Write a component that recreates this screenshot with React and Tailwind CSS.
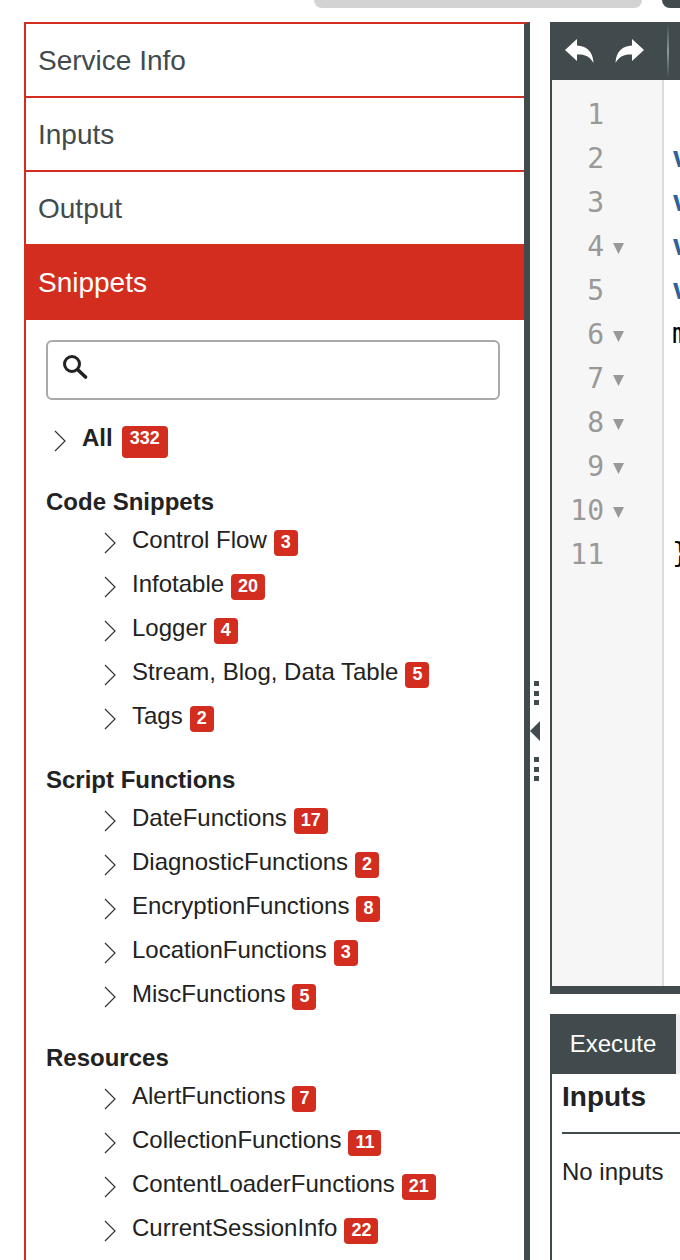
const RED = "bg-[#d32d1f]";

function Chevron() {
  return (
    <svg width="12" height="22" viewBox="0 0 12 22" fill="none" className="shrink-0">
      <path d="M1 1 L11 11 L1 21" stroke="#333" strokeWidth="1.2" />
    </svg>
  );
}

function Badge({ children, big }) {
  return (
    <span
      className={
        "ml-[7px] inline-flex items-center justify-center rounded-[4px] bg-[#d32d1f] font-bold text-white text-[18px] " +
        (big ? "h-8 px-2 pb-[8px]" : "h-[26px] min-w-[24px] px-[7px] pb-[2px]")
      }
    >
      {children}
    </span>
  );
}

function Item({ label, count }) {
  return (
    <div className="flex h-11 items-center pl-[58px]">
      <span className="flex w-7 shrink-0 items-center"><Chevron /></span>
      <span className="mb-[7px] text-[24px] leading-none text-[#222]">{label}</span>
      <Badge>{count}</Badge>
    </div>
  );
}

function Group({ title, items }) {
  return (
    <div>
      <div className="flex h-8 items-center text-[24px] font-bold text-[#222]">{title}</div>
      <div className="mt-[3px]">
        {items.map(([l, c]) => (
          <Item key={l} label={l} count={c} />
        ))}
      </div>
    </div>
  );
}

function Acc({ children }) {
  return (
    <div className="box-content flex h-[72px] items-center border-b-2 border-[#d32d1f] pl-3 pt-0 text-[28px] text-[#414b4d]">
      <span className="pt-[2px]">{children}</span>
    </div>
  );
}

const lines = [
  [1, false, "", ""],
  [2, false, "var", "b"],
  [3, false, "var", "b"],
  [4, true, "var", "b"],
  [5, false, "var", "b"],
  [6, true, "me", ""],
  [7, true, "", ""],
  [8, true, "", ""],
  [9, true, "", ""],
  [10, true, "", ""],
  [11, false, "}", ""],
];

function Dots() {
  return (
    <div className="flex flex-col gap-[4.5px] pl-1">
      <span className="h-[5px] w-[5px] bg-[#414b4d]" />
      <span className="h-[5px] w-[5px] bg-[#414b4d]" />
      <span className="h-[5px] w-[5px] bg-[#414b4d]" />
    </div>
  );
}

export default function App() {
  return (
    <div className="h-[1260px] w-[680px] overflow-hidden bg-white font-['Liberation_Sans',Arial,sans-serif]">
      <div className="flex h-2 pl-[314px]">
        <div className="h-2 w-[328px] rounded-b-[8px] bg-[#d3d3d3]" />
        <div className="ml-5 h-2 flex-1 rounded-bl-[8px] bg-[#414b4d]" />
      </div>
      <div className="mt-[14px] flex h-[1238px] pl-6">
        {/* left panel */}
        <div className="w-[506px] shrink-0 border-l-2 border-r-[6px] border-t-2 border-[#d32d1f] border-r-[#414b4d]">
          <Acc>Service Info</Acc>
          <Acc>Inputs</Acc>
          <div className="flex h-[72px] items-center pl-3 text-[28px] text-[#414b4d]"><span className="pt-[2px]">Output</span></div>
          <div className={`flex h-[76px] items-center pl-3 text-[28px] text-white ${RED}`}><span className="pt-[2px]">Snippets</span></div>
          <div className="px-5 pt-5">
            <div className="flex h-[60px] w-[454px] items-start rounded-[6px] border-2 border-[#a9a9a9] pl-[14px] pt-3">
              <svg width="26" height="26" viewBox="0 0 26 26" fill="none">
                <circle cx="10" cy="10" r="7.5" stroke="#222" strokeWidth="3" />
                <path d="M15.5 15.5 L23.5 23" stroke="#222" strokeWidth="3.6" strokeLinecap="round" />
              </svg>
            </div>
            <div className="mt-[26px] flex h-8 items-center pl-2">
              <span className="mb-[2px] flex w-7 shrink-0 items-center"><Chevron /></span>
              <span className="mb-[8px] text-[24px] font-bold text-[#222]">All</span>
              <span className="ml-[2px]" />
              <Badge big>332</Badge>
            </div>
            <div className="mt-[28px] flex flex-col gap-[23px]">
              <Group
                title="Code Snippets"
                items={[["Control Flow", 3], ["Infotable", 20], ["Logger", 4], ["Stream, Blog, Data Table", 5], ["Tags", 2]]}
              />
              <Group
                title="Script Functions"
                items={[["DateFunctions", 17], ["DiagnosticFunctions", 2], ["EncryptionFunctions", 8], ["LocationFunctions", 3], ["MiscFunctions", 5]]}
              />
              <Group
                title="Resources"
                items={[["AlertFunctions", 7], ["CollectionFunctions", 11], ["ContentLoaderFunctions", 21], ["CurrentSessionInfo", 22]]}
              />
            </div>
          </div>
        </div>

        {/* splitter */}
        <div className="flex w-5 shrink-0 flex-col pt-[659px]">
          <Dots />
          <svg width="10" height="20" viewBox="0 0 10 20" className="mt-[16px]">
            <path d="M0 10 L10 0 L10 20 Z" fill="#414b4d" />
          </svg>
          <div className="mt-[16px]"><Dots /></div>
        </div>

        {/* right panel */}
        <div className="min-w-0 flex-1 overflow-hidden">
          <div className="flex h-[972px] flex-col border-b-[8px] border-[#414b4d]">
            <div className="flex h-[58px] shrink-0 items-center bg-[#414b4d] pl-[14px]">
              <svg width="30" height="26" viewBox="0 0 30 26">
                <path d="M1 12 L13 1 L13 7.5 C22 8 29 13 29.5 25 C26 18.5 21 16 13 16.5 L13 23 Z" fill="#fff" />
              </svg>
              <svg width="30" height="26" viewBox="0 0 30 26" className="ml-[21px]">
                <path d="M29 12 L17 1 L17 7.5 C8 8 1 13 .5 25 C4 18.5 9 16 17 16.5 L17 23 Z" fill="#fff" />
              </svg>
              <div className="ml-[22px] h-[54px] w-[2px] bg-gradient-to-b from-[#414b4d] via-[#8d9a9c] to-[#414b4d]" />
            </div>
            <div className="flex min-h-0 flex-1 border-l-2 border-[#414b4d] font-['DejaVu_Sans_Mono',monospace] text-[28px] leading-[44px]">
              <div className="w-[112px] shrink-0 border-r-2 border-[#dcdcdc] bg-[#f6f6f6] pt-3 text-[#999]">
                {lines.map(([n, fold]) => (
                  <div key={n} className="flex h-11 items-center">
                    <span className="w-[52px] pt-[2px] text-right">{n}</span>
                    <span className="ml-[9px] w-3">
                      {fold && (
                        <svg width="11" height="11" viewBox="0 0 11 11" className="mt-[4px]">
                          <path d="M0 0 H11 L5.5 11 Z" fill="#999" />
                        </svg>
                      )}
                    </span>
                  </div>
                ))}
              </div>
              <div className="overflow-hidden pl-2 pt-3">
                {lines.map(([n, , t, kind]) => (
                  <div key={n} className={"h-11 " + (kind === "b" ? "font-bold text-[#2c6399]" : "text-black")}>
                    {t}
                  </div>
                ))}
              </div>
            </div>
          </div>

          <div className="mt-5 flex h-[60px] bg-[#eeeeee]">
            <div className="flex w-[126px] items-center justify-center bg-[#414b4d] text-[24px] text-white">Execute</div>
          </div>
          <div className="h-[186px] border-l-2 border-[#414b4d] pl-[10px]">
            <div className="pt-[6px] text-[28px] font-bold leading-[34px] text-[#222]">Inputs</div>
            <div className="mt-[18px] h-[2px] bg-[#414b4d]" />
            <div className="mt-[24px] text-[24px] leading-7 text-[#222]">No inputs</div>
          </div>
        </div>
      </div>
    </div>
  );
}
